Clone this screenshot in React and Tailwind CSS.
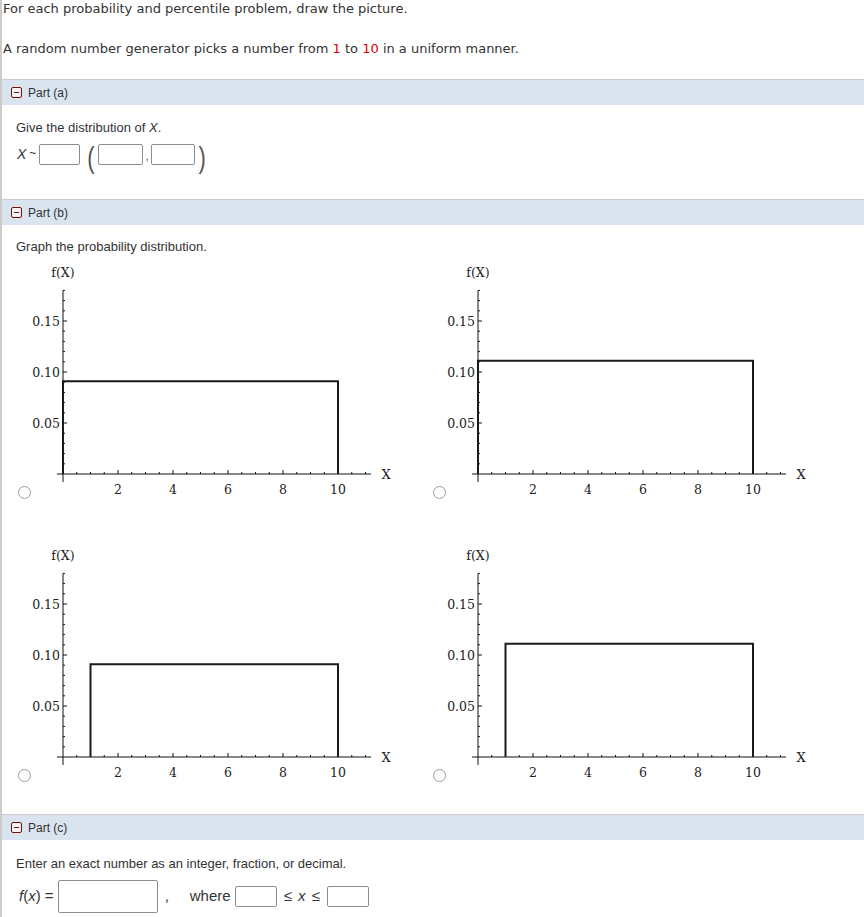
import React from "react";

// ─── Small pieces ─────────────────────────────────────────────────────────────
function PartHeader({ label }) {
  return (
    <div className="h-[26px] border-t border-[#cccccc] bg-[#d9e4ee] pl-[9px] flex items-center gap-[6px] text-[12px] text-[#333] font-['Liberation_Sans',Arial,sans-serif]">
      <span className="w-[11px] h-[11px] border border-[#7a0e0e] rounded-[2px] bg-[#f4f4f4] flex items-center justify-center">
        <span className="block w-[5px] h-[1px] bg-[#7a0e0e]" />
      </span>
      <span>{label}</span>
    </div>
  );
}

function Box({ className = "" }) {
  return (
    <span
      className={`inline-block shrink-0 bg-white border border-[#8d8d8d] rounded-[2px] ${className}`}
    />
  );
}

function Radio() {
  return (
    <span className="shrink-0 w-[13px] h-[13px] rounded-full border border-[#9a9a9a] bg-white mb-[3px]" />
  );
}

// ─── Uniform density plot ─────────────────────────────────────────────────────
function Graph({ start, height }) {
  const ox = 32;
  const oy = 212;
  const ux = 27.5;
  const uy = 1020;
  const px = (v) => ox + v * ux;
  const py = (v) => oy - v * uy;

  const xMinor = [];
  for (let i = 1; i <= 22; i++) xMinor.push(i * 0.5);
  const yMinor = [];
  for (let i = 1; i <= 18; i++) yMinor.push(i / 100);

  const serif = "'DejaVu Serif', 'Liberation Serif', serif";

  return (
    <svg width="370" height="240" className="block shrink-0">
      <text x={ox} y={15} textAnchor="middle" fontFamily={serif} fontSize="12.5" fill="#222">
        f(X)
      </text>

      {/* axes */}
      <line x1={ox} y1={py(0.18)} x2={ox} y2={oy + 8} stroke="#111" strokeWidth="1" />
      <line x1={ox - 6} y1={oy} x2={px(11.2)} y2={oy} stroke="#111" strokeWidth="1" />

      {xMinor.map((v) => {
        const major = v % 2 === 0 && v <= 10;
        return (
          <line
            key={`x${v}`}
            x1={px(v)}
            x2={px(v)}
            y1={oy}
            y2={oy - (major ? 4 : 2)}
            stroke="#111"
            strokeWidth="1"
          />
        );
      })}
      {yMinor.map((v, i) => {
        const major = (i + 1) % 5 === 0;
        return (
          <line
            key={`y${i}`}
            x1={ox}
            x2={ox + (major ? 4 : 2)}
            y1={py(v)}
            y2={py(v)}
            stroke="#111"
            strokeWidth="1"
          />
        );
      })}

      {[0.05, 0.1, 0.15].map((v) => (
        <text
          key={v}
          x={ox - 3}
          y={py(v) + 4.5}
          textAnchor="end"
          fontFamily={serif}
          fontSize="12.5"
          fill="#222"
        >
          {v.toFixed(2)}
        </text>
      ))}
      {[2, 4, 6, 8, 10].map((v) => (
        <text
          key={v}
          x={px(v)}
          y={oy + 20}
          textAnchor="middle"
          fontFamily={serif}
          fontSize="12.5"
          fill="#222"
        >
          {v}
        </text>
      ))}
      <text x={px(11.75)} y={oy + 5} textAnchor="middle" fontFamily={serif} fontSize="13" fill="#222">
        X
      </text>

      <polyline
        points={`${px(start)},${oy} ${px(start)},${py(height)} ${px(10)},${py(height)} ${px(10)},${oy}`}
        fill="none"
        stroke="#1a1a1a"
        strokeWidth="2"
      />
    </svg>
  );
}

function Choice({ start, height }) {
  return (
    <div className="flex items-end">
      <Radio />
      <Graph start={start} height={height} />
    </div>
  );
}

// ─── Page ─────────────────────────────────────────────────────────────────────
export default function App() {
  return (
    <div className="min-h-screen bg-white border-l-2 border-[#cccccc] text-[#333]">
      <div className="pl-[1px] font-['DejaVu_Sans',Verdana,sans-serif] text-[13px] leading-[18px]">
        <p>For each probability and percentile problem, draw the picture.</p>
        <p className="mt-[22px]">
          A random number generator picks a number from{" "}
          <span className="text-[#e00000]">1</span> to{" "}
          <span className="text-[#e00000]">10</span> in a uniform manner.
        </p>
      </div>

      {/* ── Part (a) ── */}
      <div className="mt-[21px]">
        <PartHeader label="Part (a)" />
        <div className="pl-[14px] pt-[15px] pb-[27px] font-['Liberation_Sans',Arial,sans-serif] text-[13px]">
          <p className="leading-[16px]">
            Give the distribution of <i>X</i>.
          </p>
          <div className="mt-[6px] h-[30px] flex items-start">
            <span className="ml-[1px] mt-[5px] text-[14px] leading-[14px] italic">X</span>
            <span className="mt-[4px] ml-[3px] text-[12px] leading-[14px]">~</span>
            <Box className="mt-[2px] ml-[3px] w-[41px] h-[21px]" />
            <span className="ml-[7px] mt-[1px] text-[22px] leading-[24px] scale-y-[1.3] origin-top text-[#555]">
              (
            </span>
            <Box className="mt-[2px] ml-[3px] w-[45px] h-[21px]" />
            <span className="mt-[8px] ml-[3px] text-[10px] leading-[14px]">,</span>
            <Box className="mt-[2px] ml-[3px] w-[44px] h-[21px]" />
            <span className="ml-[3px] mt-[1px] text-[22px] leading-[24px] scale-y-[1.3] origin-top text-[#555]">
              )
            </span>
          </div>
        </div>
      </div>

      {/* ── Part (b) ── */}
      <PartHeader label="Part (b)" />
      <div className="pl-[14px] pt-[14px] pb-[29px] font-['Liberation_Sans',Arial,sans-serif] text-[13px]">
        <p className="leading-[16px]">Graph the probability distribution.</p>
        <div className="mt-[7px] ml-[2px] grid grid-cols-[415px_413px] gap-y-[43px]">
          <Choice start={0} height={1 / 11} />
          <Choice start={0} height={1 / 9} />
          <Choice start={1} height={1 / 11} />
          <Choice start={1} height={1 / 9} />
        </div>
      </div>

      {/* ── Part (c) ── */}
      <PartHeader label="Part (c)" />
      <div className="pl-[14px] pt-[16px] pb-[4px] font-['Liberation_Sans',Arial,sans-serif] text-[13px]">
        <p className="leading-[16px]">
          Enter an exact number as an integer, fraction, or decimal.
        </p>
        <div className="mt-[8px] flex items-center text-[15px]">
          <span className="ml-[3px]">
            <i>f</i>(<i>x</i>) =
          </span>
          <Box className="ml-[4px] w-[100px] h-[33px]" />
          <span className="ml-[8px] italic">,</span>
          <span className="ml-[20px]">where</span>
          <Box className="ml-[4px] w-[42px] h-[21px]" />
          <span className="ml-[7px] tracking-[1px]">
            ≤ <i>x</i> ≤
          </span>
          <Box className="ml-[6px] w-[42px] h-[21px]" />
        </div>
      </div>
    </div>
  );
}
